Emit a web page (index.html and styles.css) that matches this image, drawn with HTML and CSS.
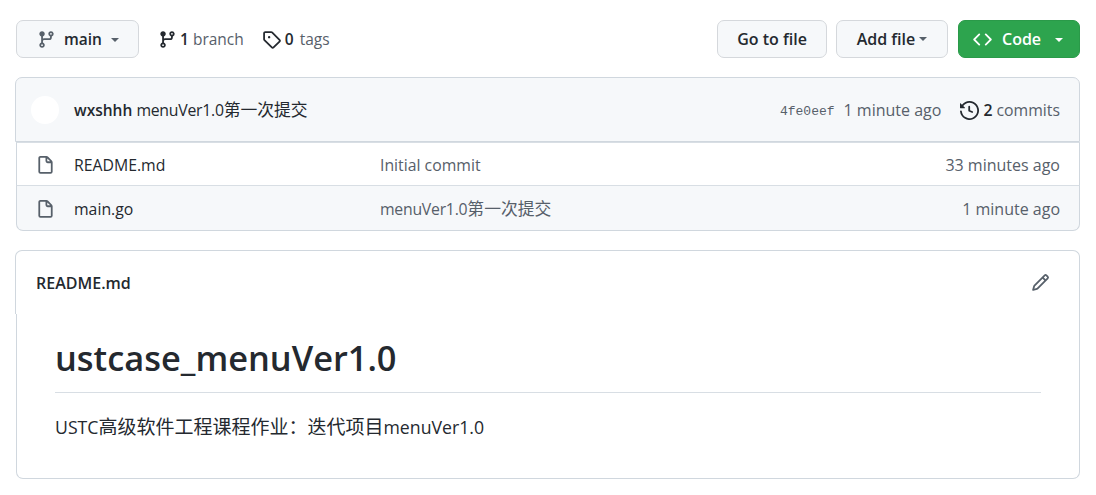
FILE: index.html
```html
<!DOCTYPE html>
<html lang="zh">
<head>
<meta charset="utf-8">
<title>ustcase_menuVer1.0</title>
<link rel="stylesheet" href="styles.css">
</head>
<body>
<main class="page">
  <div class="toolbar">
    <button class="btn branch-btn">
      <svg class="icon muted" viewBox="0 0 16 16"><path d="M11.75 2.5a.75.75 0 100 1.5.75.75 0 000-1.5zm-2.25.75a2.25 2.25 0 113 2.122V6A2.5 2.5 0 0110 8.5H6a1 1 0 00-1 1v1.128a2.251 2.251 0 11-1.5 0V5.372a2.25 2.25 0 111.5 0v1.836A2.492 2.492 0 016 7h4a1 1 0 001-1v-.628A2.25 2.25 0 019.5 3.25zM4.25 12a.75.75 0 100 1.5.75.75 0 000-1.5zM3.5 3.25a.75.75 0 111.5 0 .75.75 0 01-1.5 0z"/></svg>
      <span class="strong">main</span>
      <span class="caret caret-branch"></span>
    </button>
    <a class="stat stat-branch">
      <svg class="icon dark" viewBox="0 0 16 16"><path d="M11.75 2.5a.75.75 0 100 1.5.75.75 0 000-1.5zm-2.25.75a2.25 2.25 0 113 2.122V6A2.5 2.5 0 0110 8.5H6a1 1 0 00-1 1v1.128a2.251 2.251 0 11-1.5 0V5.372a2.25 2.25 0 111.5 0v1.836A2.492 2.492 0 016 7h4a1 1 0 001-1v-.628A2.25 2.25 0 019.5 3.25zM4.25 12a.75.75 0 100 1.5.75.75 0 000-1.5zM3.5 3.25a.75.75 0 111.5 0 .75.75 0 01-1.5 0z"/></svg>
      <span><b>1</b> branch</span>
    </a>
    <a class="stat stat-tags">
      <svg class="icon dark" viewBox="0 0 16 16"><path fill-rule="evenodd" d="M2.5 7.775V2.75a.25.25 0 01.25-.25h5.025a.25.25 0 01.177.073l6.25 6.25a.25.25 0 010 .354l-5.025 5.025a.25.25 0 01-.354 0l-6.25-6.25a.25.25 0 01-.073-.177zm-1.5 0V2.75C1 1.784 1.784 1 2.75 1h5.025c.464 0 .91.184 1.238.513l6.25 6.25a1.75 1.75 0 010 2.474l-5.026 5.026a1.75 1.75 0 01-2.474 0l-6.25-6.25A1.75 1.75 0 011 7.775zM6 5a1 1 0 100 2 1 1 0 000-2z"/></svg>
      <span><b>0</b> tags</span>
    </a>
    <div class="actions">
      <button class="btn goto-btn">Go to file</button>
      <button class="btn add-btn">Add file<span class="caret caret-add"></span></button>
      <button class="btn code-btn">
        <svg class="icon white" viewBox="0 0 16 16"><path d="M4.72 3.22a.75.75 0 011.06 1.06L2.06 8l3.72 3.72a.75.75 0 11-1.06 1.06L.47 8.53a.75.75 0 010-1.06l4.25-4.25zm6.56 0a.75.75 0 10-1.06 1.06L13.94 8l-3.72 3.72a.75.75 0 101.06 1.06l4.25-4.25a.75.75 0 000-1.06l-4.25-4.25z"/></svg>
        <span>Code</span>
        <span class="caret caret-code"></span>
      </button>
    </div>
  </div>

  <section class="files">
    <div class="commit">
      <span class="avatar"></span>
      <span class="commit-msg"><b>wxshhh</b> <span class="msg">menuVer1.0<span class="cjk">第一次提交</span></span></span>
      <code class="sha">4fe0eef</code>
      <span class="age">1 minute ago</span>
      <span class="history">
        <svg class="icon dark" viewBox="0 0 16 16"><path d="M1.643 3.143L.427 1.927A.25.25 0 000 2.104V5.75c0 .138.112.25.25.25h3.646a.25.25 0 00.177-.427L2.715 4.215a6.5 6.5 0 11-1.18 4.458.75.75 0 10-1.493.154 8.001 8.001 0 101.6-5.684zM7.75 4a.75.75 0 01.75.75v2.992l2.028.812a.75.75 0 01-.557 1.392l-2.5-1A.75.75 0 017 8.25v-3.5A.75.75 0 017.75 4z"/></svg>
        <span><b>2</b> commits</span>
      </span>
    </div>
    <div class="row">
      <svg class="icon muted" viewBox="0 0 16 16"><path fill-rule="evenodd" d="M3.75 1.5a.25.25 0 00-.25.25v11.5c0 .138.112.25.25.25h8.5a.25.25 0 00.25-.25V6H9.75A1.75 1.75 0 018 4.25V1.5H3.75zm5.75.56v2.19c0 .138.112.25.25.25h2.19L9.5 2.06zM2 1.75C2 .784 2.784 0 3.75 0h5.086c.464 0 .909.184 1.237.513l3.414 3.414c.329.328.513.773.513 1.237v8.086A1.75 1.75 0 0112.25 15h-8.5A1.75 1.75 0 012 13.25V1.75z"/></svg>
      <span class="file-name">README.md</span>
      <span class="file-msg">Initial commit</span>
      <span class="file-age">33 minutes ago</span>
    </div>
    <div class="row row-alt">
      <svg class="icon muted" viewBox="0 0 16 16"><path fill-rule="evenodd" d="M3.75 1.5a.25.25 0 00-.25.25v11.5c0 .138.112.25.25.25h8.5a.25.25 0 00.25-.25V6H9.75A1.75 1.75 0 018 4.25V1.5H3.75zm5.75.56v2.19c0 .138.112.25.25.25h2.19L9.5 2.06zM2 1.75C2 .784 2.784 0 3.75 0h5.086c.464 0 .909.184 1.237.513l3.414 3.414c.329.328.513.773.513 1.237v8.086A1.75 1.75 0 0112.25 15h-8.5A1.75 1.75 0 012 13.25V1.75z"/></svg>
      <span class="file-name">main.go</span>
      <span class="file-msg msg">menuVer1.0<span class="cjk">第一次提交</span></span>
      <span class="file-age">1 minute ago</span>
    </div>
  </section>

  <section class="readme">
    <header class="readme-head">
      <span class="readme-title">README.md</span>
      <svg class="icon muted" viewBox="0 0 16 16"><path fill-rule="evenodd" d="M11.013 1.427a1.75 1.75 0 012.474 0l1.086 1.086a1.75 1.75 0 010 2.474l-8.61 8.61c-.21.21-.47.364-.756.445l-3.251.93a.75.75 0 01-.927-.928l.929-3.25a1.75 1.75 0 01.445-.758l8.61-8.61zm1.414 1.06a.25.25 0 00-.354 0L10.811 3.75l1.439 1.44 1.263-1.263a.25.25 0 000-.354l-1.086-1.086zM11.189 6.25L9.75 4.81l-6.286 6.287a.25.25 0 00-.064.108l-.558 1.953 1.953-.558a.249.249 0 00.108-.064l6.286-6.286z"/></svg>
    </header>
    <article class="readme-body">
      <h1>ustcase_menuVer1.0</h1>
      <p>USTC<span class="cjk-lg">高级软件工程课程作业：迭代项目</span>menuVer1.0</p>
    </article>
  </section>
</main>
</body>
</html>
```
FILE: styles.css
```css
* { box-sizing: border-box; }
html, body { margin: 0; background: #fff; }
body {
  font-family: "Open Sans", "Noto Sans CJK SC", sans-serif;
  font-size: 15.8px;
  color: #24292f;
  line-height: 24px;
}
.page { padding: 20px 16px 0; }
b { font-weight: 600; }
.icon { width: 19px; height: 19px; flex: none; display: block; fill: currentColor; }
.muted { color: #57606a; }
.dark { color: #24292f; }
.white { color: #fff; }
.msg { letter-spacing: -0.25px; }
.cjk { font-size: 16.8px; letter-spacing: 0; }
.cjk-lg { font-size: 19px; }

.toolbar { display: flex; align-items: center; height: 38px; }
.btn {
  height: 38px;
  display: flex;
  align-items: center;
  font: 600 16px "Open Sans", sans-serif;
  color: #24292f;
  background: #f6f8fa;
  border: 1px solid #d5d8dc;
  border-radius: 7px;
  padding: 0;
}
.strong { font-weight: 600; font-size: 15.5px; }
.caret {
  display: block;
  width: 0;
  height: 0;
  border-style: solid;
  border-width: 4px 4px 0;
  border-color: #57606a transparent transparent;
}
.branch-btn { width: 123px; padding-left: 20px; }
.branch-btn .strong { margin-left: 8px; }
.caret-branch { margin-left: 9px; margin-top: 2px; }
.stat { display: flex; align-items: center; color: #57606a; font-size: 15.5px; }
.stat b { color: #24292f; }
.stat-branch { margin-left: 19px; }
.stat-branch span { margin-left: 3px; }
.stat-tags { margin-left: 18px; word-spacing: 2px; }
.stat-tags span { margin-left: 4px; }
.actions { margin-left: auto; display: flex; }
.goto-btn { width: 110px; justify-content: center; }
.add-btn { width: 112px; margin-left: 9px; justify-content: center; }
.caret-add { margin-left: 4px; margin-top: -1px; }
.code-btn {
  width: 122px;
  margin-left: 10px;
  padding-left: 14px;
  background: #2da44e;
  border-color: #2a9a49;
  color: #fff;
}
.code-btn span:not(.caret) { margin-left: 10px; }
.caret-code { border-top-color: #fff; margin-left: 14px; margin-top: 2px; }

.files { margin-top: 19px; }
.commit {
  height: 65px;
  margin-left: -1px;
  display: flex;
  align-items: center;
  padding: 1px 19px 0 15px;
  background: #f6f8fa;
  border: 1px solid #d0d7de;
  border-radius: 7px 7px 0 0;
}
.avatar { width: 28px; height: 28px; border-radius: 50%; background: #fff; flex: none; }
.commit-msg { margin-left: 15px; }
.commit-msg b { font-size: 15.5px; }
.sha {
  margin-left: auto;
  font: 13px "Liberation Mono", monospace;
  color: #57606a;
  margin-top: 2px;
}
.age { margin-left: 9px; color: #57606a; font-size: 16px; }
.history { margin-left: 19px; display: flex; align-items: center; color: #57606a; }
.history span { margin-left: 4px; }
.history b { color: #24292f; }

.row {
  height: 43px;
  display: flex;
  align-items: center;
  padding: 2px 19px 0 19px;
  border: 1px solid #d0d7de;
  border-bottom: 0;
  border-top-color: #d8dee4;
}
.row-alt {
  height: 46px;
  background: #f6f8fa;
  border-bottom: 1px solid #d0d7de;
  border-radius: 0 0 7px 7px;
}
.file-name { margin-left: 19px; width: 306px; }
.file-msg { color: #57606a; }
.file-age { margin-left: auto; color: #57606a; font-size: 16px; }

.readme { margin-top: 19px; height: 229px; display: flex; flex-direction: column; }
.readme-head {
  height: 64px;
  margin-left: -1px;
  display: flex;
  align-items: center;
  justify-content: space-between;
  padding: 0 29px 0 20px;
  border: 1px solid #d0d7de;
  border-bottom: 0;
  border-radius: 7px 7px 0 0;
}
.readme-title { font-weight: 600; font-size: 16px; }
.readme-body {
  flex: 1;
  padding: 0 38px;
  border: 1px solid #d0d7de;
  border-top: 0;
  border-radius: 0 0 7px 7px;
}
h1 {
  margin: 0;
  padding-bottom: 12px;
  font-size: 34.4px;
  line-height: 44px;
  font-weight: 600;
  color: #24292f;
  border-bottom: 1px solid #d8dee4;
  height: 79px;
  display: flex;
  align-items: flex-end;
}
p { margin: 22px 0 0; font-size: 17.7px; }
```
